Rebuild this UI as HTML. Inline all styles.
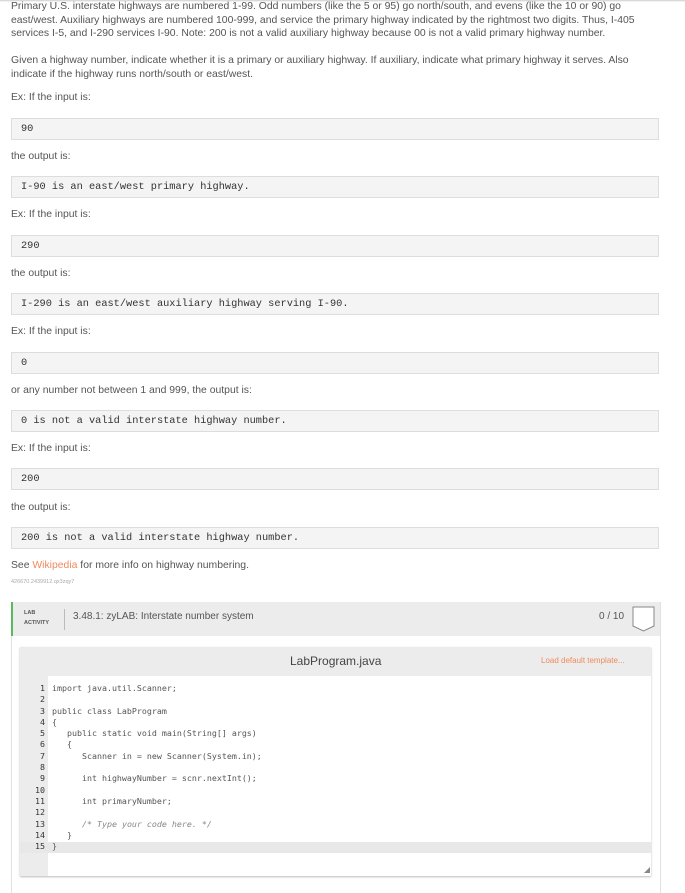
<!DOCTYPE html>
<html><head><style>
body{margin:0;width:685px;height:889px;background:#fff;position:relative;overflow:hidden;font-family:"Liberation Sans",sans-serif;color:#555;}
.t{position:absolute;left:11px;font-size:10.4px;line-height:13.5px;letter-spacing:0;white-space:nowrap;}
.b{position:absolute;left:11px;height:20px;background:#f4f4f4;border:1px solid #ddd;font-family:"Liberation Mono",monospace;font-size:10.3px;line-height:20px;color:#333;padding-left:9px;box-sizing:content-box;width:637px;}
.code{position:absolute;left:52px;font-family:"DejaVu Sans Mono",monospace;font-size:8.3px;color:#555;white-space:pre;line-height:11.3px;}
.ln{position:absolute;left:20px;width:25px;text-align:right;font-family:"DejaVu Sans Mono",monospace;font-size:8.3px;color:#333;line-height:11.3px;}
</style></head><body>
<div style="position:absolute;left:0;top:0;width:685px;height:2px;background:linear-gradient(#ccc,#fff)"></div>
<div class="t" style="top:0">Primary U.S. interstate highways are numbered 1-99. Odd numbers (like the 5 or 95) go north/south, and evens (like the 10 or 90) go<br>east/west. Auxiliary highways are numbered 100-999, and service the primary highway indicated by the rightmost two digits. Thus, I-405<br>services I-5, and I-290 services I-90. Note: 200 is not a valid auxiliary highway because 00 is not a valid primary highway number.</div>
<div class="t" style="top:54px">Given a highway number, indicate whether it is a primary or auxiliary highway. If auxiliary, indicate what primary highway it serves. Also<br>indicate if the highway runs north/south or east/west.</div>
<div class="t" style="top:91px">Ex: If the input is:</div>
<div class="b" style="top:118px">90</div>
<div class="t" style="top:150px">the output is:</div>
<div class="b" style="top:176px">I-90 is an east/west primary highway.</div>
<div class="t" style="top:208px">Ex: If the input is:</div>
<div class="b" style="top:235px">290</div>
<div class="t" style="top:267px">the output is:</div>
<div class="b" style="top:293px">I-290 is an east/west auxiliary highway serving I-90.</div>
<div class="t" style="top:325px">Ex: If the input is:</div>
<div class="b" style="top:352px">0</div>
<div class="t" style="top:384px">or any number not between 1 and 999, the output is:</div>
<div class="b" style="top:410px">0 is not a valid interstate highway number.</div>
<div class="t" style="top:442px">Ex: If the input is:</div>
<div class="b" style="top:468px">200</div>
<div class="t" style="top:501px">the output is:</div>
<div class="b" style="top:527px">200 is not a valid interstate highway number.</div>
<div class="t" style="top:559px">See <span style="color:#f08a5d">Wikipedia</span> for more info on highway numbering.</div>
<div class="t" style="top:578px;font-size:5.5px;color:#aaa;line-height:8px">426670.2439912.qx3zqy7</div>

<div style="position:absolute;left:11px;top:602px;width:648px;height:290px;border:1px solid #e2e2e2;border-bottom:none;background:#fff"></div>
<div style="position:absolute;left:11px;top:602px;width:649px;height:34px;background:#ececec;border-left:2px solid #5cb85c;box-sizing:border-box"></div>
<div style="position:absolute;left:24px;top:608px;font-size:5.5px;font-weight:bold;color:#555;line-height:10px">LAB<br>ACTIVITY</div>
<div style="position:absolute;left:64px;top:609px;width:1px;height:21px;background:#bbb"></div>
<div style="position:absolute;left:73px;top:611px;font-size:10px;color:#555">3.48.1: zyLAB: Interstate number system</div>
<div style="position:absolute;left:599px;top:611px;font-size:10px;color:#555">0 / 10</div>
<svg style="position:absolute;left:632px;top:606px" width="24" height="26"><path d="M1 1H22V20L11.5 25L1 20Z" fill="#fff" stroke="#888" stroke-width="1"/></svg>

<div style="position:absolute;left:20px;top:647px;width:631px;height:229px;background:#fff;box-shadow:0 1px 2px #bbb"></div>
<div style="position:absolute;left:20px;top:647px;width:631px;height:29px;background:#ececec"></div>
<div style="position:absolute;left:290px;top:654px;font-size:12px;color:#444">LabProgram.java</div>
<div style="position:absolute;left:541px;top:656px;font-size:8px;color:#f08a5d">Load default template...</div>
<div style="position:absolute;left:20px;top:676px;width:28px;height:200px;background:#ececec"></div>
<div style="position:absolute;left:20px;top:842px;width:631px;height:11px;background:#e8e8e8"></div>
<div class="ln" style="top:683px">1<br>2<br>3<br>4<br>5<br>6<br>7<br>8<br>9<br>10<br>11<br>12<br>13<br>14<br>15</div>
<div class="code" style="top:683px">import java.util.Scanner;

public class LabProgram
{
   public static void main(String[] args)
   {
      Scanner in = new Scanner(System.in);

      int highwayNumber = scnr.nextInt();

      int primaryNumber;

      <i style="color:#888">/* Type your code here. */</i>
   }
}</div>
<svg style="position:absolute;left:644px;top:867px" width="6" height="6"><path d="M0 6L6 0V6Z" fill="#888"/></svg>
</body></html>
